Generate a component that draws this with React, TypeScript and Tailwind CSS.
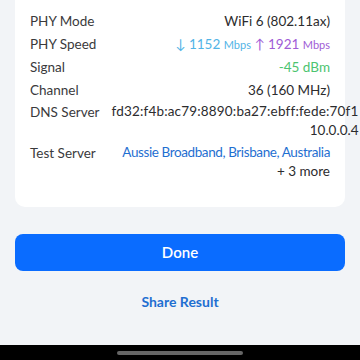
import React from "react";

function Row({ label, children }: { label: string; children: React.ReactNode }) {
  return (
    <div className="flex justify-between items-start gap-3">
      <span className="whitespace-nowrap text-[#3a3a3c]">{label}</span>
      <div className="text-right whitespace-nowrap">{children}</div>
    </div>
  );
}

export default function App() {
  return (
    <div
      className="w-[360px] h-[360px] bg-[#f2f4f7] flex flex-col overflow-hidden"
      style={{ fontFamily: "Lato, 'Noto Sans', sans-serif" }}
    >
      <div className="mx-[15px] bg-white rounded-b-[10px] px-[15px] pt-[10px] pb-[26px] text-[13.5px] leading-[22.5px] text-[#2c2c2e] flex flex-col">
        <Row label="PHY Mode">WiFi 6 (802.11ax)</Row>
        <Row label="PHY Speed">
          <span className="text-[#52b4e6]">
            ↓ 1152 <span className="text-[11px]">Mbps</span>
          </span>{" "}
          <span className="text-[#a05cd6]">
            ↑ 1921 <span className="text-[11px]">Mbps</span>
          </span>
        </Row>
        <Row label="Signal">
          <span className="text-[#4cc470]">-45 dBm</span>
        </Row>
        <Row label="Channel">36 (160 MHz)</Row>
        <Row label="DNS Server">
          <div className="leading-[19px] mt-[1px] tracking-[0.18px]">fd32:f4b:ac79:8890:ba27:ebff:fede:70f1</div>
          <div className="leading-[19px]">10.0.0.4</div>
        </Row>
        <div className="h-[1.5px]" />
        <Row label="Test Server">
          <div className="text-[#1f6fd1] leading-[19px] mt-[1px] tracking-[-0.4px]">Aussie Broadband, Brisbane, Australia</div>
          <div className="leading-[19px]">+ 3 more</div>
        </Row>
      </div>
      <button className="mx-[15px] mt-[27px] h-[37px] rounded-[8px] bg-[#0a6cff] text-white text-[15px] font-semibold">
        Done
      </button>
      <div className="mt-[20px] text-center text-[#1f6fd1] text-[14px] font-bold">Share Result</div>
      <div className="flex-1" />
      <div className="h-[15px] bg-black flex justify-center items-start pt-[6px]">
        <div className="w-[126px] h-[4px] rounded-full bg-[#666]" />
      </div>
    </div>
  );
}
